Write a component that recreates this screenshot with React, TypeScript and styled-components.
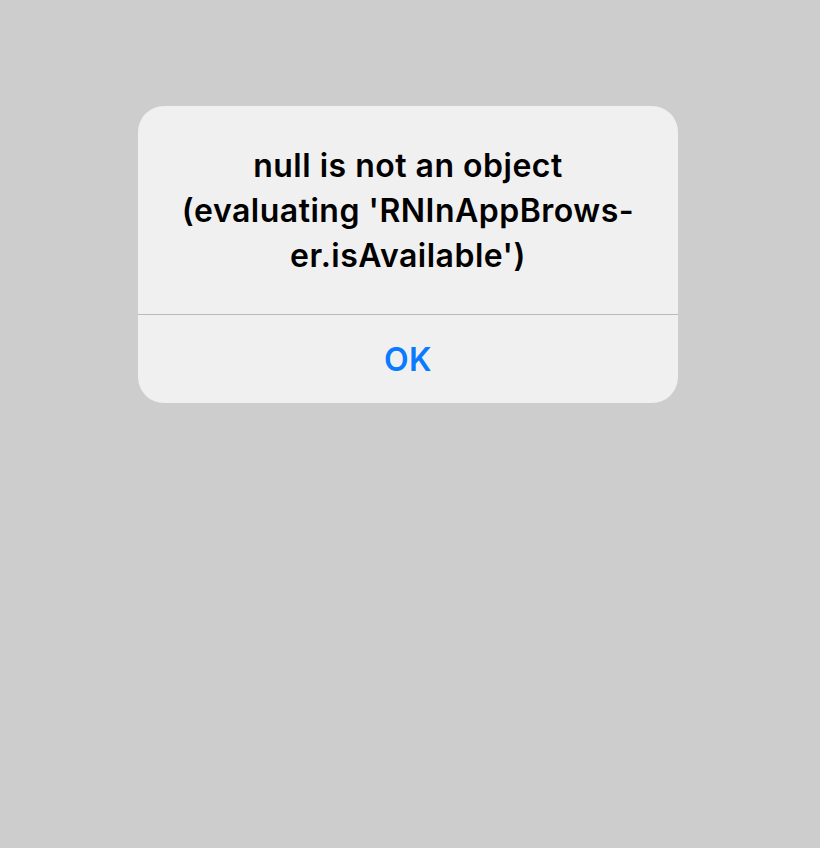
import React from "react";
import styled, { createGlobalStyle } from "styled-components";

const GlobalStyle = createGlobalStyle`
  html, body {
    margin: 0;
    padding: 0;
    background: #cdcdcd;
  }
  body {
    font-family: Inter, "Noto Sans", "Liberation Sans", sans-serif;
    -webkit-font-smoothing: antialiased;
  }
`;

const Screen = styled.div`
  min-height: 848px;
  display: flex;
  justify-content: flex-start;
  align-items: flex-start;
  padding: 106px 0 0 138px;
  box-sizing: border-box;
`;

const AlertBox = styled.div`
  width: 540px;
  background: #f0f0f0;
  border-radius: 26px;
  overflow: hidden;
  display: flex;
  flex-direction: column;
`;

const Message = styled.div`
  height: 208px;
  box-sizing: border-box;
  padding: 0 20px;
  display: flex;
  align-items: center;
  justify-content: center;
  text-align: center;
  color: #000;
  font-size: 32px;
  font-weight: 600;
  line-height: 45px;
  letter-spacing: 0.5px;
`;

const Divider = styled.div`
  height: 1px;
  background: #b9b9b9;
`;

const ActionButton = styled.button`
  height: 88px;
  border: none;
  background: transparent;
  color: #0a7aff;
  font-family: inherit;
  font-size: 32px;
  font-weight: 600;
  letter-spacing: 0.5px;
  cursor: pointer;
  display: flex;
  align-items: center;
  justify-content: center;
`;

function App() {
    return (
        <>
            <GlobalStyle />
            <Screen>
                <AlertBox>
                    <Message>
                        <div>
                            null is not an object
                            <br />
                            (evaluating 'RNInAppBrows-
                            <br />
                            er.isAvailable')
                        </div>
                    </Message>
                    <Divider />
                    <ActionButton>OK</ActionButton>
                </AlertBox>
            </Screen>
        </>
    );
}

export default App;
